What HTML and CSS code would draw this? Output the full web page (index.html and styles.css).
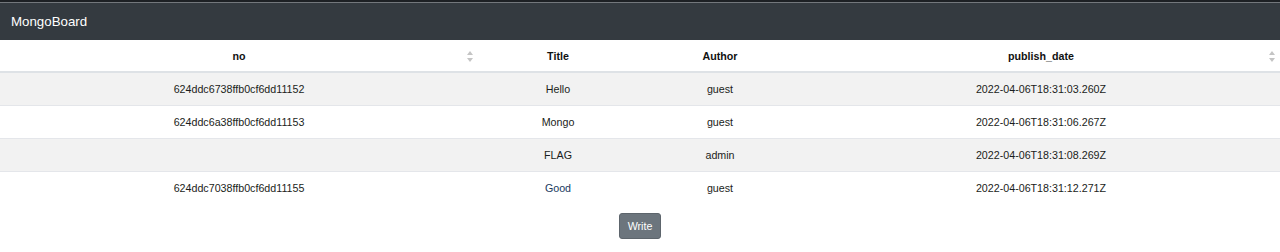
FILE: index.html
```html
<!DOCTYPE html>
<html lang="en">
<head>
  <meta charset="UTF-8">
  <meta name="viewport" content="width=device-width, initial-scale=1.0">
  <title>MongoBoard</title>
  <link rel="stylesheet" href="styles.css">
</head>
<body>
  <!-- Navigation Bar -->
  <div class="nav-bar">
    <span class="brand">MongoBoard</span>
  </div>

  <!-- Board -->
  <table class="board">
    <colgroup>
      <col class="col-no">
      <col class="col-title">
      <col class="col-author">
      <col>
    </colgroup>
    <thead>
      <tr>
        <th class="sortable">no<span class="sort"></span></th>
        <th>Title</th>
        <th>Author</th>
        <th class="sortable">publish_date<span class="sort"></span></th>
      </tr>
    </thead>
    <tbody>
      <tr>
        <td>624ddc6738ffb0cf6dd11152</td>
        <td>Hello</td>
        <td>guest</td>
        <td>2022-04-06T18:31:03.260Z</td>
      </tr>
      <tr>
        <td>624ddc6a38ffb0cf6dd11153</td>
        <td>Mongo</td>
        <td>guest</td>
        <td>2022-04-06T18:31:06.267Z</td>
      </tr>
      <tr>
        <td></td>
        <td>FLAG</td>
        <td>admin</td>
        <td>2022-04-06T18:31:08.269Z</td>
      </tr>
      <tr>
        <td>624ddc7038ffb0cf6dd11155</td>
        <td><a href="#" class="link">Good</a></td>
        <td>guest</td>
        <td>2022-04-06T18:31:12.271Z</td>
      </tr>
    </tbody>
  </table>

  <div class="actions">
    <button class="btn">Write</button>
  </div>
</body>
</html>
```

FILE: styles.css
```css
body {
  font-family: "Liberation Sans", Arial, sans-serif;
  font-size: 10.7px;
  margin: 0;
  color: #1a1d20;
  background-color: #fff;
}

/* Navigation Bar */
.nav-bar {
  display: flex;
  align-items: center;
  height: 38px;
  padding-left: 11px;
  background-color: #343a40;
  border-top: 2px solid #1d2024;
  box-shadow: inset 0 1px 0 #73777c;
}
.nav-bar .brand {
  color: #fff;
  font-size: 13.3px;
}

/* Board */
.board {
  width: 100%;
  border-collapse: collapse;
  table-layout: fixed;
}
.board .col-no { width: 478px; }
.board .col-title { width: 160px; }
.board .col-author { width: 164px; }
.board th,
.board td {
  height: 32px;
  padding: 0;
  text-align: center;
  border-bottom: 1px solid #e4e6ea;
}
.board th {
  height: 31px;
  font-weight: bold;
  color: #111;
  border-bottom: 2px solid #dee2e6;
}
.board tbody tr:nth-child(odd) {
  background-color: #f2f2f2;
}
.board tbody tr:last-child td {
  border-bottom: none;
}
.board .link {
  color: #203a5e;
  text-decoration: none;
}

/* Sort arrows */
.sortable {
  position: relative;
}
.sort {
  position: absolute;
  right: 5px;
  top: 11px;
  width: 6px;
  height: 11px;
}
.sort::before,
.sort::after {
  content: '';
  position: absolute;
  left: 0;
  border-left: 3.5px solid transparent;
  border-right: 3.5px solid transparent;
}
.sort::before {
  top: 0;
  border-bottom: 4px solid #c4c4c4;
}
.sort::after {
  bottom: 0;
  border-top: 4px solid #c4c4c4;
}

/* Actions */
.actions {
  display: flex;
  justify-content: center;
  padding-top: 9px;
}
.btn {
  font-family: inherit;
  font-size: 10.7px;
  color: #fff;
  background-color: #6c757d;
  border: 1px solid #5d656c;
  border-radius: 3px;
  width: 42px;
  height: 26px;
  padding: 0;
  cursor: pointer;
}
```
